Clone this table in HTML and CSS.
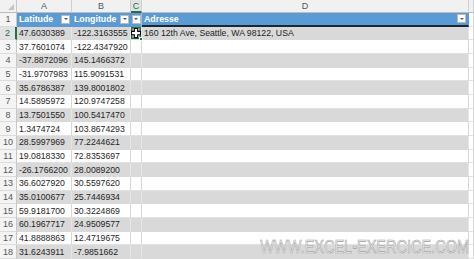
FILE: index.html
```html
<!DOCTYPE html>
<html>
<head>
<meta charset="utf-8">
<link rel="stylesheet" href="styles.css">
</head>
<body>
<div class="sheet">
  <div class="row hdr">
    <div class="rh corner"><span class="tri"></span></div>
    <div class="ch">A</div><div class="ch">B</div><div class="ch sel">C</div><div class="ch">D</div><div class="ch"></div>
  </div>
  <div class="row head">
    <div class="rh">1</div>
    <div class="cell th">Latitude<span class="fb"></span></div>
    <div class="cell th">Longitude<span class="fb"></span></div>
    <div class="cell th narrow"><span class="fb"></span></div>
    <div class="cell th dk">Adresse<span class="fb"></span></div>
    <div class="cell"></div>
  </div>
  <div class="row band">
    <div class="rh selrow">2</div>
    <div class="cell">47.6030389</div><div class="cell">-122.3163555</div>
    <div class="cell active"><svg class="cursor" viewBox="0 0 12 12" width="12" height="12"><path d="M4 0.5h4v3.5h3.5v4H8v3.5H4V8H0.5V4H4z" fill="#fff" stroke="#000" stroke-width="1.3"/></svg><span class="handle"></span></div>
    <div class="cell">160 12th Ave, Seattle, WA 98122, USA</div><div class="cell"></div>
  </div>
  <div class="row"><div class="rh">3</div><div class="cell">37.7601074</div><div class="cell">-122.4347920</div><div class="cell"></div><div class="cell"></div><div class="cell"></div></div>
  <div class="row band"><div class="rh">4</div><div class="cell">-37.8872096</div><div class="cell">145.1466372</div><div class="cell"></div><div class="cell"></div><div class="cell"></div></div>
  <div class="row"><div class="rh">5</div><div class="cell">-31.9707983</div><div class="cell">115.9091531</div><div class="cell"></div><div class="cell"></div><div class="cell"></div></div>
  <div class="row band"><div class="rh">6</div><div class="cell">35.6786387</div><div class="cell">139.8001802</div><div class="cell"></div><div class="cell"></div><div class="cell"></div></div>
  <div class="row"><div class="rh">7</div><div class="cell">14.5895972</div><div class="cell">120.9747258</div><div class="cell"></div><div class="cell"></div><div class="cell"></div></div>
  <div class="row band"><div class="rh">8</div><div class="cell">13.7501550</div><div class="cell">100.5417470</div><div class="cell"></div><div class="cell"></div><div class="cell"></div></div>
  <div class="row"><div class="rh">9</div><div class="cell">1.3474724</div><div class="cell">103.8674293</div><div class="cell"></div><div class="cell"></div><div class="cell"></div></div>
  <div class="row band"><div class="rh">10</div><div class="cell">28.5997969</div><div class="cell">77.2244621</div><div class="cell"></div><div class="cell"></div><div class="cell"></div></div>
  <div class="row"><div class="rh">11</div><div class="cell">19.0818330</div><div class="cell">72.8353697</div><div class="cell"></div><div class="cell"></div><div class="cell"></div></div>
  <div class="row band"><div class="rh">12</div><div class="cell">-26.1766200</div><div class="cell">28.0089200</div><div class="cell"></div><div class="cell"></div><div class="cell"></div></div>
  <div class="row"><div class="rh">13</div><div class="cell">36.6027920</div><div class="cell">30.5597620</div><div class="cell"></div><div class="cell"></div><div class="cell"></div></div>
  <div class="row band"><div class="rh">14</div><div class="cell">35.0100677</div><div class="cell">25.7446934</div><div class="cell"></div><div class="cell"></div><div class="cell"></div></div>
  <div class="row"><div class="rh">15</div><div class="cell">59.9181700</div><div class="cell">30.3224869</div><div class="cell"></div><div class="cell"></div><div class="cell"></div></div>
  <div class="row band"><div class="rh">16</div><div class="cell">60.1967717</div><div class="cell">24.9509577</div><div class="cell"></div><div class="cell"></div><div class="cell"></div></div>
  <div class="row"><div class="rh">17</div><div class="cell">41.8888863</div><div class="cell">12.4719675</div><div class="cell"></div><div class="cell"></div><div class="cell"></div></div>
  <div class="row band"><div class="rh">18</div><div class="cell">31.6243911</div><div class="cell">-7.9851662</div><div class="cell"></div><div class="cell"></div><div class="cell"></div></div>
  <div class="watermark">WWW.EXCEL-EXERCICE.COM</div>
</div>
</body>
</html>
```

FILE: styles.css
```css
* { box-sizing: border-box; }
html, body { margin: 0; padding: 0; background: #fff; }
body { font-family: "Liberation Sans", Arial, sans-serif; overflow: hidden; }

.sheet {
  position: relative;
  width: 474px;
  height: 259px;
  display: grid;
  grid-template-rows: 13px repeat(18, 1fr);
  overflow: hidden;
}

.row {
  display: grid;
  grid-template-columns: 17px 55px 59px 11px 327px 5px;
  min-height: 0;
}

.rh {
  background: #f4f4f4;
  border-right: 1px solid #c8c8c8;
  border-bottom: 1px solid #dcdcdc;
  color: #555;
  font-size: 9px;
  display: flex;
  align-items: center;
  justify-content: center;
}
.rh.selrow { border-right: 2px solid #217346; background: #e2e2e2; color: #217346; }

.hdr .ch {
  background: #f1f1f1;
  border-right: 1px solid #d0d0d0;
  border-bottom: 1px solid #bcbcbc;
  color: #555;
  font-size: 9px;
  display: flex;
  align-items: center;
  justify-content: center;
}
.hdr .ch.sel { background: #e2e2e2; border-bottom: 2px solid #217346; color: #217346; }
.corner { position: relative; background: #f1f1f1; border-bottom: 1px solid #bcbcbc; }
.tri {
  position: absolute;
  right: 2px;
  bottom: 2px;
  width: 0;
  height: 0;
  border-left: 6px solid transparent;
  border-bottom: 6px solid #c4c4c4;
}

.cell {
  position: relative;
  border-right: 1px solid #d8d8d8;
  border-bottom: 1px solid #e2e2e2;
  font-size: 8.7px;
  color: #1e1e1e;
  padding-left: 2px;
  display: flex;
  align-items: center;
  white-space: nowrap;
  overflow: visible;
}
.band .cell { background: #d9d9d9; border-right-color: #e6e6e6; border-bottom-color: #d9d9d9; }
.band .cell:last-child { background: #fff; border-right-color: #d8d8d8; border-bottom-color: #e2e2e2; }

.head .cell.th {
  background: #5b9bd5;
  color: #fff;
  font-weight: bold;
  font-size: 8.8px;
  border-right-color: #5b9bd5;
  border-bottom: 1px solid #5b9bd5;
  justify-content: space-between;
  padding-right: 1px;
}
.head .cell.th.narrow { padding-left: 1px; justify-content: center; border-right-color: #9bbfe4; }
.head .cell.th.dk { border-bottom: 2px solid #1d2633; padding-right: 2px; }

.fb {
  position: relative;
  width: 9px;
  height: 9px;
  background: #fff;
  border: 1px solid #b9b9b9;
  flex: none;
}
.fb::after {
  content: "";
  position: absolute;
  left: 1.5px;
  top: 2.5px;
  border-left: 2.5px solid transparent;
  border-right: 2.5px solid transparent;
  border-top: 2.5px solid #555;
}

.cell.active {
  box-shadow: inset 0 0 0 1.5px #217346;
  padding: 0;
  justify-content: center;
}
.cursor { position: relative; z-index: 2; }
.handle {
  position: absolute;
  right: -2px;
  bottom: -2px;
  width: 4px;
  height: 4px;
  background: #217346;
  border: 1px solid #fff;
  z-index: 3;
}

.watermark {
  position: absolute;
  right: 5px;
  bottom: 3px;
  font-size: 14.5px;
  line-height: 1;
  color: #f2f2f2;
  -webkit-text-stroke: 0.5px #a4a4a4;
  transform: scaleY(1.25);
  transform-origin: right bottom;
  letter-spacing: 0;
  white-space: nowrap;
}
```
